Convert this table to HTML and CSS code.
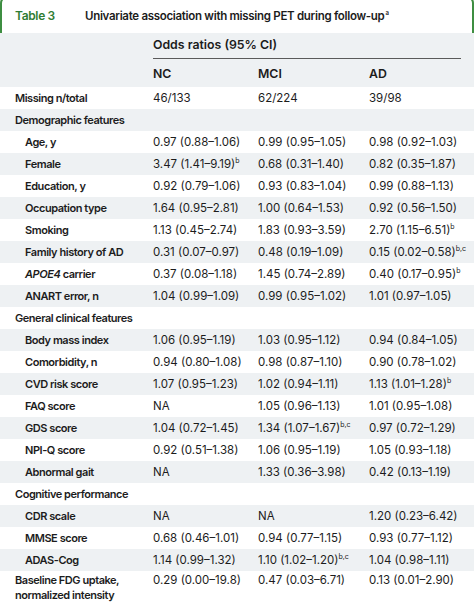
FILE: index.html
```html
<!DOCTYPE html>
<html>
<head>
<meta charset="utf-8">
<link rel="stylesheet" href="styles.css">
</head>
<body>
<div class="frame">
  <div class="caption">
    <span class="tnum">Table 3</span>
    <span class="ttl">Univariate association with missing PET during follow-up<sup>a</sup></span>
  </div>
  <table class="tbl">
    <colgroup>
      <col class="c0"><col class="c1"><col class="c2"><col class="c3">
    </colgroup>
    <thead>
      <tr class="h1"><th></th><th colspan="3"><div class="span">Odds ratios (95% CI)</div></th></tr>
      <tr class="h2"><th></th><th>NC</th><th>MCI</th><th>AD</th></tr>
    </thead>
    <tbody>
      <tr class="w"><td class="lab">Missing n/total</td><td>46/133</td><td>62/224</td><td>39/98</td></tr>
      <tr class="g"><td class="lab">Demographic features</td><td></td><td></td><td></td></tr>
      <tr class="w"><td class="lab sub">Age, y</td><td>0.97 (0.88–1.06)</td><td>0.99 (0.95–1.05)</td><td>0.98 (0.92–1.03)</td></tr>
      <tr class="g"><td class="lab sub">Female</td><td>3.47 (1.41–9.19)<sup>b</sup></td><td>0.68 (0.31–1.40)</td><td>0.82 (0.35–1.87)</td></tr>
      <tr class="w"><td class="lab sub">Education, y</td><td>0.92 (0.79–1.06)</td><td>0.93 (0.83–1.04)</td><td>0.99 (0.88–1.13)</td></tr>
      <tr class="g"><td class="lab sub">Occupation type</td><td>1.64 (0.95–2.81)</td><td>1.00 (0.64–1.53)</td><td>0.92 (0.56–1.50)</td></tr>
      <tr class="w"><td class="lab sub">Smoking</td><td>1.13 (0.45–2.74)</td><td>1.83 (0.93–3.59)</td><td>2.70 (1.15–6.51)<sup>b</sup></td></tr>
      <tr class="g"><td class="lab sub">Family history of AD</td><td>0.31 (0.07–0.97)</td><td>0.48 (0.19–1.09)</td><td>0.15 (0.02–0.58)<sup>b,c</sup></td></tr>
      <tr class="w"><td class="lab sub"><i>APOE4</i> carrier</td><td>0.37 (0.08–1.18)</td><td>1.45 (0.74–2.89)</td><td>0.40 (0.17–0.95)<sup>b</sup></td></tr>
      <tr class="g"><td class="lab sub">ANART error, n</td><td>1.04 (0.99–1.09)</td><td>0.99 (0.95–1.02)</td><td>1.01 (0.97–1.05)</td></tr>
      <tr class="w"><td class="lab">General clinical features</td><td></td><td></td><td></td></tr>
      <tr class="g"><td class="lab sub">Body mass index</td><td>1.06 (0.95–1.19)</td><td>1.03 (0.95–1.12)</td><td>0.94 (0.84–1.05)</td></tr>
      <tr class="w"><td class="lab sub">Comorbidity, n</td><td>0.94 (0.80–1.08)</td><td>0.98 (0.87–1.10)</td><td>0.90 (0.78–1.02)</td></tr>
      <tr class="g"><td class="lab sub">CVD risk score</td><td>1.07 (0.95–1.23)</td><td>1.02 (0.94–1.11)</td><td>1.13 (1.01–1.28)<sup>b</sup></td></tr>
      <tr class="w"><td class="lab sub">FAQ score</td><td>NA</td><td>1.05 (0.96–1.13)</td><td>1.01 (0.95–1.08)</td></tr>
      <tr class="g"><td class="lab sub">GDS score</td><td>1.04 (0.72–1.45)</td><td>1.34 (1.07–1.67)<sup>b,c</sup></td><td>0.97 (0.72–1.29)</td></tr>
      <tr class="w"><td class="lab sub">NPI-Q score</td><td>0.92 (0.51–1.38)</td><td>1.06 (0.95–1.19)</td><td>1.05 (0.93–1.18)</td></tr>
      <tr class="g"><td class="lab sub">Abnormal gait</td><td>NA</td><td>1.33 (0.36–3.98)</td><td>0.42 (0.13–1.19)</td></tr>
      <tr class="w"><td class="lab">Cognitive performance</td><td></td><td></td><td></td></tr>
      <tr class="g"><td class="lab sub">CDR scale</td><td>NA</td><td>NA</td><td>1.20 (0.23–6.42)</td></tr>
      <tr class="w"><td class="lab sub">MMSE score</td><td>0.68 (0.46–1.01)</td><td>0.94 (0.77–1.15)</td><td>0.93 (0.77–1.12)</td></tr>
      <tr class="g"><td class="lab sub">ADAS-Cog</td><td>1.14 (0.99–1.32)</td><td>1.10 (1.02–1.20)<sup>b,c</sup></td><td>1.04 (0.98–1.11)</td></tr>
      <tr class="w last"><td class="lab">Baseline FDG uptake, normalized intensity</td><td>0.29 (0.00–19.8)</td><td>0.47 (0.03–6.71)</td><td>0.13 (0.01–2.90)</td></tr>
    </tbody>
  </table>
</div>
</body>
</html>
```

FILE: styles.css
```css
html, body {
  margin: 0;
  padding: 0;
  background: #ffffff;
}
body {
  font-family: Inter, "Liberation Sans", sans-serif;
  color: #1c1c1c;
  width: 474px;
  height: 602px;
  overflow: hidden;
}
.frame {
  width: 474px;
}
.caption {
  box-sizing: border-box;
  height: 37px;
  margin-top: -4px;
  border: 2px solid #3e8e41;
  border-bottom: none;
  border-radius: 7px 7px 0 0;
  display: flex;
  align-items: center;
  padding: 0 0 0 13px;
  font-weight: 600;
}
.tnum {
  color: #2f7d34;
  width: 70px;
  font-size: 12px;
  letter-spacing: -0.35px;
}
.ttl {
  color: #1c1c1c;
  font-size: 11.5px;
  letter-spacing: -0.3px;
}
.ttl sup {
  font-size: 6px;
  vertical-align: 5px;
  line-height: 0;
  letter-spacing: 0;
  margin-left: 1px;
}
.tbl {
  width: 474px;
  border-collapse: collapse;
  table-layout: fixed;
  font-size: 11.5px;
}
.c0 { width: 153px; }
.c1 { width: 105px; }
.c2 { width: 111px; }
.c3 { width: 105px; }
.tbl th {
  text-align: left;
  font-weight: 600;
  font-size: 12.3px;
  letter-spacing: 0;
  padding: 0;
}
thead tr {
  background: #eef1f3;
}
.h1 th {
  height: 26px;
  vertical-align: bottom;
}
.span {
  margin-right: 13px;
  padding-bottom: 6px;
  border-bottom: 1px solid #5a5a5a;
}
.h2 th {
  height: 28px;
}
.tbl td {
  height: 22px;
  padding: 0;
  white-space: nowrap;
  font-weight: 400;
}
.tbl td.lab {
  font-weight: 600;
  font-size: 11px;
  letter-spacing: -0.45px;
  padding-left: 15px;
  white-space: normal;
}
.tbl td.sub {
  padding-left: 25px;
}
.w { background: #ffffff; }
.g { background: #eef1f3; }
.tbl sup {
  font-size: 7px;
  vertical-align: 5px;
  line-height: 0;
}
.last td {
  vertical-align: top;
  padding-top: 2px;
  line-height: 15px;
}
.last td.lab {
  padding-right: 6px;
}
```
